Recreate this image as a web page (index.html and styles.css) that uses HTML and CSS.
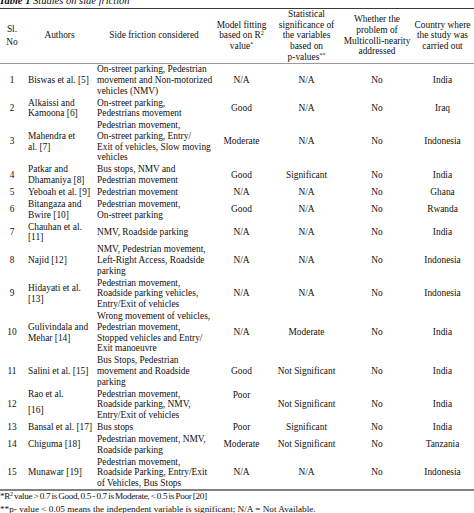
FILE: index.html
```html
<!DOCTYPE html>
<html lang="en">
<head>
<meta charset="utf-8">
<title>Table 1 Studies on side friction</title>
<link rel="stylesheet" href="styles.css">
</head>
<body>
<div class="caption"><b>Table 1</b> Studies on side friction</div>
<table class="friction">
  <colgroup>
    <col class="w-no"><col class="w-auth"><col class="w-side"><col class="w-model"><col class="w-stat"><col class="w-multi"><col class="w-country">
  </colgroup>
  <thead>
    <tr>
      <th><span class="sl">Sl.<br>No</span></th>
      <th>Authors</th>
      <th>Side friction considered</th>
      <th>Model fitting<br>based on R<sup>2</sup><br>value<sup>*</sup></th>
      <th>Statistical<br>significance of<br>the variables<br>based on<br>p-values<sup>**</sup></th>
      <th>Whether the<br>problem of<br>Multicolli-nearity<br>addressed</th>
      <th>Country where<br>the study was<br>carried out</th>
    </tr>
  </thead>
  <tbody>
    <tr><td class="no">1</td><td class="auth">Biswas et al. [5]</td><td class="side">On-street parking, Pedestrian<br>movement and Non-motorized<br>vehicles (NMV)</td><td class="val">N/A</td><td class="val">N/A</td><td class="val">No</td><td class="val">India</td></tr>
    <tr><td class="no">2</td><td class="auth">Alkaissi and<br>Kamoona [6]</td><td class="side">On-street parking,<br>Pedestrians movement</td><td class="val">Good</td><td class="val">N/A</td><td class="val">No</td><td class="val">Iraq</td></tr>
    <tr><td class="no">3</td><td class="auth">Mahendra et<br>al. [7]</td><td class="side">Pedestrian movement,<br>On-street parking, Entry/<br>Exit of vehicles, Slow moving<br>vehicles</td><td class="val">Moderate</td><td class="val">N/A</td><td class="val">No</td><td class="val">Indonesia</td></tr>
    <tr><td class="no">4</td><td class="auth">Patkar and<br>Dhamaniya [8]</td><td class="side">Bus stops, NMV and<br>Pedestrian movement</td><td class="val">Good</td><td class="val">Significant</td><td class="val">No</td><td class="val">India</td></tr>
    <tr><td class="no">5</td><td class="auth">Yeboah et al. [9]</td><td class="side">Pedestrian movement</td><td class="val">N/A</td><td class="val">N/A</td><td class="val">No</td><td class="val">Ghana</td></tr>
    <tr><td class="no">6</td><td class="auth">Bitangaza and<br>Bwire [10]</td><td class="side">Pedestrian movement,<br>On-street parking</td><td class="val">Good</td><td class="val">N/A</td><td class="val">No</td><td class="val">Rwanda</td></tr>
    <tr><td class="no">7</td><td class="auth">Chauhan et al.<br>[11]</td><td class="side">NMV, Roadside parking</td><td class="val">N/A</td><td class="val">N/A</td><td class="val">No</td><td class="val">India</td></tr>
    <tr><td class="no">8</td><td class="auth">Najid [12]</td><td class="side">NMV, Pedestrian movement,<br>Left-Right Access, Roadside<br>parking</td><td class="val">N/A</td><td class="val">N/A</td><td class="val">No</td><td class="val">Indonesia</td></tr>
    <tr><td class="no">9</td><td class="auth">Hidayati et al.<br>[13]</td><td class="side">Pedestrian movement,<br>Roadside parking vehicles,<br>Entry/Exit of vehicles</td><td class="val">N/A</td><td class="val">N/A</td><td class="val">No</td><td class="val">Indonesia</td></tr>
    <tr><td class="no">10</td><td class="auth">Gulivindala and<br>Mehar [14]</td><td class="side">Wrong movement of vehicles,<br>Pedestrian movement,<br>Stopped vehicles and Entry/<br>Exit manoeuvre</td><td class="val">N/A</td><td class="val">Moderate</td><td class="val">No</td><td class="val">India</td></tr>
    <tr><td class="no">11</td><td class="auth">Salini et al. [15]</td><td class="side">Bus Stops, Pedestrian<br>movement and Roadside<br>parking</td><td class="val">Good</td><td class="val">Not Significant</td><td class="val">No</td><td class="val">India</td></tr>
    <tr><td class="no">12</td><td class="auth top"><div>Rao et al.</div><div class="ref-low">[16]</div></td><td class="side">Pedestrian movement,<br>Roadside parking, NMV,<br>Entry/Exit of vehicles</td><td class="val top raised">Poor</td><td class="val">Not Significant</td><td class="val">No</td><td class="val">India</td></tr>
    <tr><td class="no">13</td><td class="auth">Bansal et al. [17]</td><td class="side">Bus stops</td><td class="val">Poor</td><td class="val">Significant</td><td class="val">No</td><td class="val">India</td></tr>
    <tr><td class="no">14</td><td class="auth">Chiguma [18]</td><td class="side">Pedestrian movement, NMV,<br>Roadside parking</td><td class="val">Moderate</td><td class="val">Not Significant</td><td class="val">No</td><td class="val">Tanzania</td></tr>
    <tr><td class="no">15</td><td class="auth">Munawar [19]</td><td class="side">Pedestrian movement,<br>Roadside Parking, Entry/Exit<br>of Vehicles, Bus Stops</td><td class="val">N/A</td><td class="val">N/A</td><td class="val">No</td><td class="val">Indonesia</td></tr>
  </tbody>
</table>
<div class="notes">
  <p class="note note-r">*R<sup>2</sup> value &gt; 0.7 is Good, 0.5 - 0.7 is Moderate, &lt; 0.5 is Poor [20]</p>
  <p class="note">**p- value &lt; 0.05 means the independent variable is significant; N/A = Not Available.</p>
</div>
</body>
</html>
```
FILE: styles.css
```css
html, body {
  margin: 0;
  padding: 0;
  background: #ffffff;
}

body {
  width: 474px;
  height: 513px;
  overflow: hidden;
  font-family: "Liberation Serif", "Times New Roman", serif;
  color: #111111;
}

.caption {
  margin-top: -5px;
  margin-left: -1px;
  height: 12px;
  line-height: 12px;
  font-size: 10.5px;
  font-style: italic;
  white-space: nowrap;
}

.caption b {
  font-weight: bold;
}

.friction {
  margin-top: 1px;
  width: 474px;
  table-layout: fixed;
  border-collapse: separate;
  border-spacing: 0;
  font-size: 9.4px;
  line-height: 10.7px;
}

.w-no { width: 24px; }
.w-auth { width: 71px; }
.w-side { width: 118px; }
.w-model { width: 57px; }
.w-stat { width: 73px; }
.w-multi { width: 68px; }
.w-country { width: 63px; }

.friction th {
  font-weight: normal;
  text-align: center;
  vertical-align: middle;
  padding: 0;
  white-space: nowrap;
  border-top: 1px solid #3a3a3a;
  border-bottom: 1px solid #9a9a9a;
}

.friction sup {
  font-size: 6px;
  line-height: 0;
  vertical-align: 3px;
}

.sl {
  display: block;
  line-height: 12.7px;
}

.friction td {
  padding: 0.65px 0;
  vertical-align: middle;
  white-space: nowrap;
}

.friction tbody tr:last-child td {
  border-bottom: 2px solid #808080;
}

.friction td.no {
  text-align: center;
}

.friction td.auth {
  text-align: left;
  padding-left: 4px;
}

.friction td.side {
  text-align: left;
  padding-left: 2px;
}

.friction td.val {
  text-align: center;
}

.friction td.top {
  vertical-align: top;
}

.friction td.raised {
  padding-top: 2px;
}

.ref-low {
  margin-top: 5.3px;
}

.notes {
  margin-top: -1px;
}

.note {
  margin: 0;
  font-size: 9.2px;
  line-height: 13px;
  white-space: nowrap;
}

.note-r {
  letter-spacing: -0.35px;
  word-spacing: -0.6px;
}

.note sup {
  font-size: 6px;
  line-height: 0;
  vertical-align: 3px;
}
```
